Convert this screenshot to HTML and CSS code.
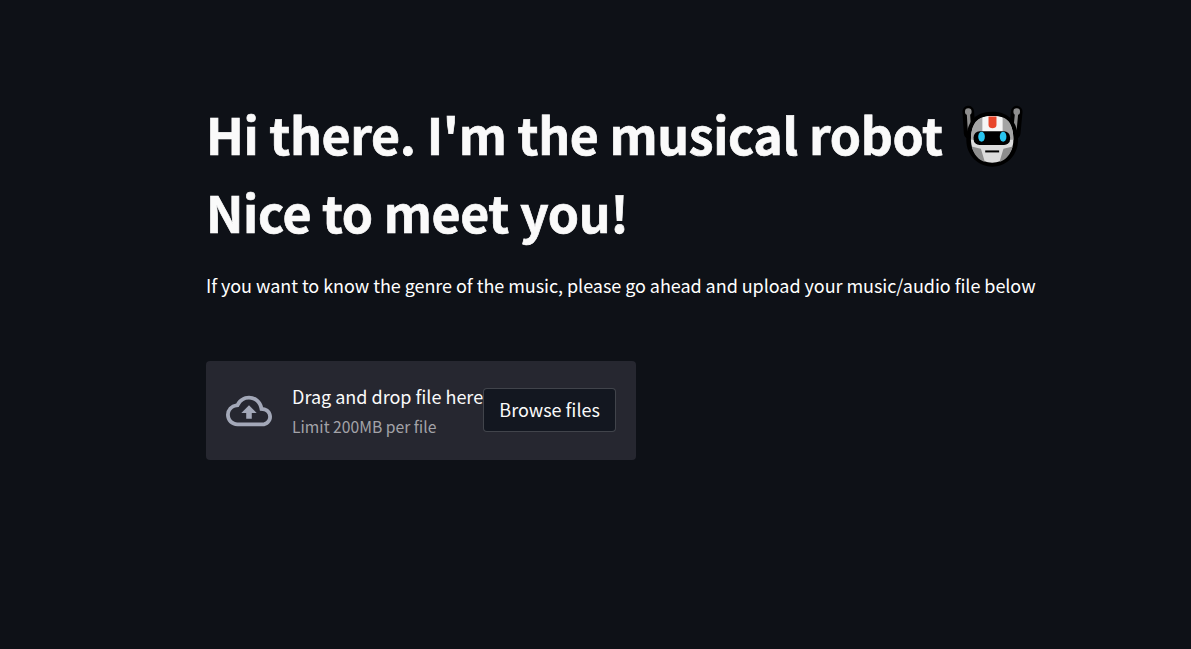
FILE: index.html
```html
<!DOCTYPE html>
<html lang="en">
<head>
    <meta charset="UTF-8">
    <meta name="viewport" content="width=device-width, initial-scale=1.0">
    <title>Musical robot</title>
    <link rel="stylesheet" href="styles.css">
</head>
<body>
    <main class="container">
        <h1 class="title">
            Hi there. I'm the musical robot
            <svg class="robot" viewBox="60 40 190 190" aria-hidden="true">
                <!-- antennas -->
                <path d="M82 60 L86 125 M228 60 L222 125" stroke="#000" stroke-width="35" stroke-linecap="round" fill="none"/>
                <path d="M82 60 L86 125 M228 60 L222 125" stroke="#8e8e8e" stroke-width="10" fill="none"/>
                <circle cx="82" cy="60" r="10" fill="#8e8e8e"/>
                <circle cx="228" cy="60" r="10" fill="#8e8e8e"/>
                <!-- head -->
                <path d="M154 60 C100 60 76 95 76 145 C76 195 115 226 154 226 C193 226 232 195 232 145 C232 95 208 60 154 60 Z" fill="#000"/>
                <path d="M154 73 C108 73 90 100 90 145 C90 185 120 214 154 214 C188 214 218 185 218 145 C218 100 200 73 154 73 Z" fill="#dcdcdc"/>
                <path d="M125 77 C105 83 90 103 90 145 L125 145 Z M185 77 C205 83 218 103 218 145 L185 145 Z" fill="#a4a4a4"/>
                <path d="M125 77 C143 72 167 72 185 77 L185 125 L125 125 Z" fill="#f5f5f5"/>
                <path d="M143 75 H167 V100 C167 107 161 110 155 110 C149 110 143 107 143 100 Z" fill="#e8452a"/>
                <path d="M92 165 L120 172 L132 212 C112 205 98 188 92 165 Z M216 165 L188 172 L176 212 C196 205 210 188 216 165 Z" fill="#8e8e8e"/>
                <!-- face -->
                <rect x="98" y="119" width="110" height="42" rx="18" fill="#000"/>
                <ellipse cx="122" cy="136" rx="10" ry="15" fill="#29c5f0"/>
                <ellipse cx="187" cy="136" rx="10" ry="15" fill="#29c5f0"/>
                <rect x="133" y="177" width="42" height="6" fill="#000"/>
            </svg>
        </h1>
        <h1 class="title">Nice to meet you!</h1>
        <p class="intro">If you want to know the genre of the music, please go ahead and upload your music/audio file below</p>

        <section class="dropzone">
            <div class="drop-info">
                <svg class="cloud" viewBox="0 0 24 24" aria-hidden="true">
                    <path d="M19.35 10.04A7.49 7.49 0 0 0 12 4C9.11 4 6.6 5.64 5.35 8.04A5.994 5.994 0 0 0 0 14c0 3.31 2.69 6 6 6h13c2.76 0 5-2.24 5-5 0-2.64-2.05-4.78-4.65-4.96zM19 18H6c-2.21 0-4-1.79-4-4 0-2.05 1.53-3.76 3.56-3.97l1.07-.11.5-.95A5.469 5.469 0 0 1 12 6c2.62 0 4.88 1.86 5.39 4.43l.3 1.5 1.53.11A2.98 2.98 0 0 1 22 15c0 1.65-1.35 3-3 3zM8 13h2.55v3h2.9v-3H16l-4-4z"/>
                </svg>
                <div class="drop-text">
                    <span class="drop-main">Drag and drop file here</span>
                    <small class="drop-limit">Limit 200MB per file</small>
                </div>
            </div>
            <button class="browse">Browse files</button>
        </section>
    </main>
</body>
</html>
```

FILE: styles.css
```css
body {
    font-family: "Noto Sans CJK JP", "Noto Sans", sans-serif;
    background-color: #0e1117;
    color: #fafafa;
    margin: 0;
    padding: 0;
}

.container {
    width: 730px;
    margin-left: 206px;
    padding-top: 94px;
}

.title {
    margin: 0;
    font-size: 50px;
    font-weight: 700;
    line-height: 78px;
    white-space: nowrap;
    letter-spacing: -0.37px;
    -webkit-text-stroke: 0.7px #fafafa;
}

.robot {
    width: 63px;
    height: 63px;
    margin-left: 7px;
    vertical-align: -13px;
}

.intro {
    margin: 19px 0 0;
    font-size: 18px;
    line-height: 32px;
    color: #fff;
    white-space: nowrap;
    letter-spacing: -0.05px;
}

.dropzone {
    display: flex;
    align-items: center;
    justify-content: space-between;
    box-sizing: border-box;
    width: 430px;
    height: 99px;
    margin-top: 60px;
    padding: 0 20px;
    background-color: #262730;
    border-radius: 4px;
}

.drop-info {
    display: flex;
    align-items: center;
}

.cloud {
    width: 46px;
    height: 46px;
    margin-right: 20px;
    fill: #a3a8b8;
    flex-shrink: 0;
}

.drop-text {
    display: flex;
    flex-direction: column;
    white-space: nowrap;
}

.drop-main {
    font-size: 18px;
    line-height: 26px;
}

.drop-limit {
    margin-top: 6px;
    font-size: 15.7px;
    line-height: 24px;
    color: #a3a3a8;
}

.browse {
    box-sizing: border-box;
    width: 133px;
    height: 44px;
    margin-bottom: 1px;
    padding: 0 0 3px;
    background-color: #131720;
    color: #fafafa;
    border: 1px solid rgba(250, 250, 250, 0.2);
    border-radius: 4px;
    font-family: inherit;
    font-size: 18px;
    flex-shrink: 0;
}
```
